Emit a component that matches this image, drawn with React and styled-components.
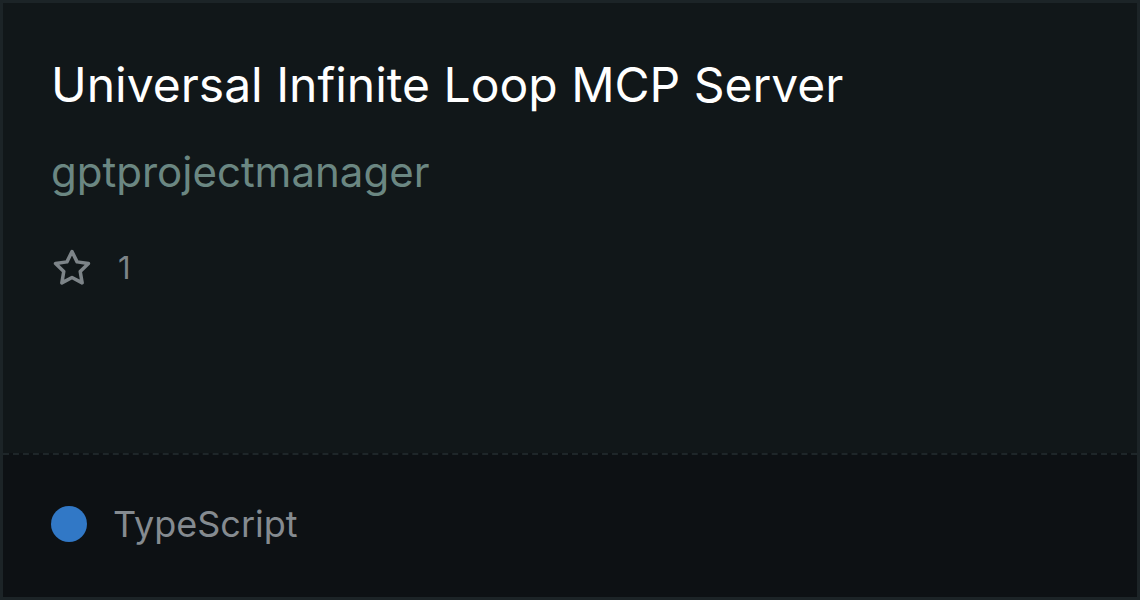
import React from 'react'
import styled, { createGlobalStyle } from 'styled-components'

const GlobalStyle = createGlobalStyle`
  html, body {
    margin: 0;
    padding: 0;
    background: #0d1114;
  }
  * {
    box-sizing: border-box;
  }
`

const Card = styled.div`
  width: 1140px;
  height: 600px;
  display: flex;
  flex-direction: column;
  border: 3px solid #1c2427;
  background: #111719;
  font-family: Inter, "Noto Sans", sans-serif;
  overflow: hidden;
`

const Body = styled.div`
  flex: 1;
  display: flex;
  flex-direction: column;
  padding: 53px 48px 0;
`

const Title = styled.h1`
  margin: 0;
  font-size: 48px;
  font-weight: 400;
  line-height: 58px;
  color: #ffffff;
`

const Owner = styled.div`
  margin-top: 33px;
  font-size: 42px;
  line-height: 50px;
  color: #6b8782;
`

const Stats = styled.div`
  display: flex;
  align-items: center;
  gap: 25px;
  margin-top: 50px;
  color: #7d8488;
  font-size: 31px;
  line-height: 42px;
`

const Footer = styled.div`
  height: 144px;
  display: flex;
  align-items: center;
  gap: 26px;
  padding: 0 48px 4px;
  background: #0d1114;
  border-top: 2px dashed #1e2629;
`

const Dot = styled.span`
  flex: none;
  width: 36px;
  height: 36px;
  border-radius: 50%;
  background: ${p => p.color};
`

const Lang = styled.span`
  font-size: 36px;
  color: #858b90;
`

function Star() {
  return (
    <svg width="42" height="42" viewBox="0 0 24 24" fill="none" stroke="#7d8488" strokeWidth="2" strokeLinejoin="round">
      <path d="M12 2.6l2.9 5.9 6.5.95-4.7 4.58 1.1 6.47L12 17.45l-5.8 3.05 1.1-6.47-4.7-4.58 6.5-.95z" />
    </svg>
  )
}

export default function App() {
  return (
    <>
      <GlobalStyle />
      <Card>
        <Body>
          <Title>Universal Infinite Loop MCP Server</Title>
          <Owner>gptprojectmanager</Owner>
          <Stats>
            <Star />
            <span>1</span>
          </Stats>
        </Body>
        <Footer>
          <Dot color="#3178c6" />
          <Lang>TypeScript</Lang>
        </Footer>
      </Card>
    </>
  )
}
